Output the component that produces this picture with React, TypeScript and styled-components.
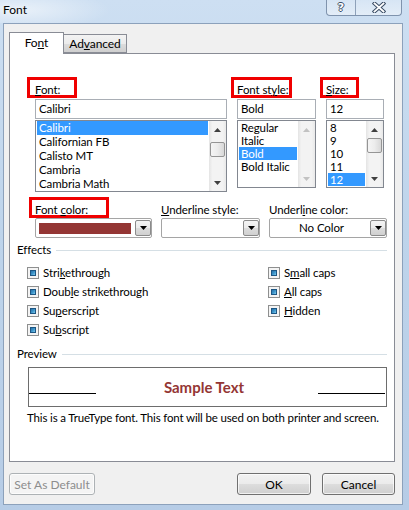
import React from "react";
import styled, { createGlobalStyle } from "styled-components";

const GlobalStyle = createGlobalStyle`
  html, body {
    margin: 0;
    padding: 0;
  }
  body {
    font-family: Lato, "Liberation Sans", sans-serif;
    font-size: 11.5px;
    letter-spacing: -0.1px;
    color: #000;
    background: #fff;
  }
  * {
    box-sizing: border-box;
  }
`;

///Window chrome

const Window = styled.div`
  width: 409px;
  height: 510px;
  display: flex;
  flex-direction: column;
  background: linear-gradient(180deg, #cddff2 0%, #bed4eb 45%, #b6cce6 100%);
`;

const TitleBar = styled.div`
  height: 23px;
  flex: none;
  display: flex;
  justify-content: space-between;
  align-items: flex-start;
  padding: 0 7px 0 3px;
  background: radial-gradient(ellipse 90px 20px at 20px 10px, rgba(255, 255, 255, 0.55), rgba(255, 255, 255, 0));
`;

const Title = styled.span`
  line-height: 20px;
  font-size: 12px;
  letter-spacing: 0;
  text-shadow: 0 0 6px rgba(255, 255, 255, 0.95);
`;

const CaptionGroup = styled.div`
  display: flex;
  height: 16px;
  border: 1px solid #7f93ad;
  border-top: none;
  border-radius: 0 0 4px 4px;
  overflow: hidden;
  background: linear-gradient(180deg, rgba(255, 255, 255, 0.2), rgba(255, 255, 255, 0.45));
`;

const CaptionButton = styled.div<{ $w: number }>`
  width: ${(p) => p.$w}px;
  display: flex;
  align-items: center;
  justify-content: center;
  & + & {
    border-left: 1px solid #8ea1b9;
  }
`;

const HelpGlyph = styled.span`
  font-family: "DejaVu Sans", sans-serif;
  font-weight: bold;
  font-size: 11px;
  line-height: 14px;
  color: #fff;
  text-shadow: 1px 0 0 #3d4f66, -1px 0 0 #3d4f66, 0 1px 0 #3d4f66, 0 -1px 0 #3d4f66;
`;

const Client = styled.div`
  flex: 1;
  margin: 0 6px 5px 3px;
  border: 1px solid #8ca1bb;
  background: #f0f0f0;
  display: flex;
  flex-direction: column;
  padding: 8px 7px 9px 5px;
`;

///Tabs

const TabStrip = styled.div`
  display: flex;
  align-items: flex-end;
  height: 21px;
  flex: none;
`;

const Tab = styled.div<{ $active?: boolean; $w: number }>`
  width: ${(p) => p.$w}px;
  height: ${(p) => (p.$active ? 22 : 19)}px;
  margin-bottom: ${(p) => (p.$active ? -1 : 0)}px;
  position: relative;
  z-index: ${(p) => (p.$active ? 1 : 0)};
  border: 1px solid #898c95;
  border-bottom: ${(p) => (p.$active ? "none" : "1px solid #898c95")};
  border-left: ${(p) => (p.$active ? "1px solid #898c95" : "none")};
  background: ${(p) => (p.$active ? "#fff" : "linear-gradient(180deg, #f3f3f3 0%, #ebebeb 50%, #dddddd 51%, #cfcfcf 100%)")};
  display: flex;
  justify-content: center;
  align-items: center;
  padding-bottom: ${(p) => (p.$active ? 2 : 0)}px;
  font-size: 12px;
`;

const Panel = styled.div`
  flex: 1;
  border: 1px solid #898c95;
  background: #fff;
  display: flex;
  flex-direction: column;
  padding: 23px 7px 0 7px;
`;

const U = styled.u`
  text-decoration: underline;
  text-underline-offset: 1px;
`;

///Font / style / size

const TopGrid = styled.div`
  display: grid;
  grid-template-columns: 192px 79px 58px;
  justify-content: space-between;
  width: 349px;
  margin-left: 18px;
`;

const Field = styled.div`
  display: flex;
  flex-direction: column;
  min-width: 0;
`;

const FieldLabel = styled.span<{ $boxed?: boolean; $w?: number; $shift?: number }>`
  display: block;
  align-self: flex-start;
  height: 21px;
  width: ${(p) => (p.$w ? `${p.$w}px` : "auto")};
  border: 3px solid ${(p) => (p.$boxed ? "#f00000" : "transparent")};
  margin-left: ${(p) => -6 - (p.$shift ?? 0)}px;
  padding: 2px 0 0 ${(p) => 3 + (p.$shift ?? 0)}px;
  line-height: 15px;
  white-space: nowrap;
`;

const TextBox = styled.div`
  height: 20px;
  margin-top: 1px;
  border: 1px solid #a9aeb5;
  padding-left: 3px;
  line-height: 18px;
`;

const ListBox = styled.div<{ $h: number }>`
  height: ${(p) => p.$h}px;
  margin-top: 1px;
  border: 1px solid #828790;
  display: flex;
`;

const ListItems = styled.div`
  flex: 1;
  min-width: 0;
  padding: 0 1px;
  overflow: hidden;
`;

const ListItem = styled.div<{ $selected?: boolean; $h: number }>`
  height: ${(p) => p.$h}px;
  line-height: ${(p) => p.$h}px;
  padding-left: 2px;
  white-space: nowrap;
  overflow: hidden;
  background: ${(p) => (p.$selected ? "#3399ff" : "transparent")};
  color: ${(p) => (p.$selected ? "#fff" : "#000")};
`;

const ScrollBar = styled.div`
  width: 17px;
  flex: none;
  display: flex;
  flex-direction: column;
  background: linear-gradient(90deg, #e4e4e4 0%, #f3f3f3 20%, #f3f3f3 80%, #e9e9e9 100%);
`;

const ScrollArrow = styled.div`
  height: 17px;
  flex: none;
  display: flex;
  align-items: center;
  justify-content: center;
`;

const ScrollSpace = styled.div`
  flex: 1;
`;

const Thumb = styled.div<{ $offset: number }>`
  height: 15px;
  margin: ${(p) => p.$offset}px 1px 0 1px;
  border: 1px solid #959595;
  border-radius: 2px;
  background: linear-gradient(90deg, #f5f5f5 0%, #ececec 50%, #d8d8d8 100%);
`;

const ArrowGlyph: React.FC<{ up?: boolean; color?: string }> = ({ up, color = "#404040" }) => (
  <svg width="7" height="4" viewBox="0 0 7 4">
    <path d={up ? "M0 4 L3.5 0 L7 4 Z" : "M0 0 L7 0 L3.5 4 Z"} fill={color} />
  </svg>
);

const Scroller: React.FC<{ disabled?: boolean; thumb?: number }> = ({ disabled, thumb }) => (
  <ScrollBar>
    <ScrollArrow>
      <ArrowGlyph up color={disabled ? "#c2c2c2" : "#404040"} />
    </ScrollArrow>
    {thumb !== undefined && <Thumb $offset={thumb} />}
    <ScrollSpace />
    <ScrollArrow>
      <ArrowGlyph color={disabled ? "#c2c2c2" : "#404040"} />
    </ScrollArrow>
  </ScrollBar>
);

///Combo row

const ComboGrid = styled.div`
  display: grid;
  grid-template-columns: 117px 99px 118px;
  column-gap: 9px;
  margin: 5px 0 0 18px;
`;

const Combo = styled.div`
  height: 20px;
  border: 1px solid #a5a5a5;
  border-radius: 2px;
  background: #fff;
  display: flex;
  align-items: center;
  padding: 1px 0 1px 3px;
`;

const ComboValue = styled.div`
  flex: 1;
  text-align: center;
  line-height: 16px;
`;

const Swatch = styled.div<{ $color: string }>`
  flex: 1;
  height: 11px;
  margin-right: 4px;
  background: ${(p) => p.$color};
`;

const ComboButton = styled.div`
  width: 16px;
  height: 16px;
  flex: none;
  border: 1px solid #8b8b8b;
  border-radius: 2px;
  background: linear-gradient(180deg, #f4f4f4 0%, #ebebeb 50%, #dcdcdc 51%, #d0d0d0 100%);
  display: flex;
  align-items: center;
  justify-content: center;
`;

///Effects + preview

const GroupHeader = styled.div<{ $gap: number }>`
  display: flex;
  align-items: center;
  height: 14px;
  line-height: 14px;
  margin-top: ${(p) => p.$gap}px;
  &::after {
    content: "";
    flex: 1;
    height: 1px;
    margin-left: 5px;
    background: #d5dfe5;
  }
`;

const CheckArea = styled.div`
  display: grid;
  grid-template-columns: 241px 1fr;
  margin: 6px 0 0 10px;
`;

const CheckColumn = styled.div`
  display: flex;
  flex-direction: column;
`;

const CheckRow = styled.div`
  height: 19px;
  display: flex;
  align-items: center;
  gap: 4px;
`;

const CheckBox = styled.span`
  width: 12px;
  height: 12px;
  flex: none;
  border: 1px solid #8e8f8f;
  background: #f4f4f4;
  padding: 2px;
  display: flex;
`;

const CheckFill = styled.span`
  flex: 1;
  border: 1px solid #1d5683;
  background: linear-gradient(135deg, #2872ab 0%, #3d94c9 50%, #7ccbee 100%);
`;

const PreviewBox = styled.div`
  height: 40px;
  margin: 6px 0 0 11px;
  border: 1px solid #6d6d6d;
  display: flex;
  align-items: center;
  justify-content: space-between;
  padding: 0 1px 0 0;
`;

const PreviewLine = styled.div`
  width: 67px;
  height: 1px;
  margin-top: 12px;
  background: #000;
`;

const SampleText = styled.span<{ $color: string }>`
  font-family: Lato, "Liberation Sans", sans-serif;
  font-weight: bold;
  font-size: 15px;
  letter-spacing: 0;
  color: ${(p) => p.$color};
  margin-right: 6px;
`;

const Note = styled.div`
  margin: 3px 0 0 10px;
  line-height: 15px;
  white-space: nowrap;
  letter-spacing: -0.15px;
`;

///Buttons

const ButtonRow = styled.div`
  display: flex;
  height: 22px;
  margin-top: 11px;
  flex: none;
  gap: 11px;
`;

const Spacer = styled.div`
  flex: 1;
`;

const DialogButton = styled.button<{ $w: number }>`
  width: ${(p) => p.$w}px;
  height: 22px;
  padding: 0;
  font-family: inherit;
  font-size: 12px;
  color: ${(p) => (p.disabled ? "#8d8d8d" : "#000")};
  border: 1px solid ${(p) => (p.disabled ? "#adb2b5" : "#707070")};
  border-radius: 3px;
  background: ${(p) =>
    p.disabled ? "#f4f4f4" : "linear-gradient(180deg, #f2f2f2 0%, #ebebeb 50%, #dddddd 51%, #cfcfcf 100%)"};
  box-shadow: inset 0 0 0 1px rgba(255, 255, 255, 0.7);
`;

const fonts = ["Calibri", "Californian FB", "Calisto MT", "Cambria", "Cambria Math"];
const styles = ["Regular", "Italic", "Bold", "Bold Italic"];
const sizes = ["8", "9", "10", "11", "12"];

const App: React.FC = () => {
  return (
    <Window>
      <GlobalStyle />
      <TitleBar>
        <Title>Font</Title>
        <CaptionGroup>
          <CaptionButton $w={28}>
            <HelpGlyph>?</HelpGlyph>
          </CaptionButton>
          <CaptionButton $w={46}>
            <svg width="14" height="11" viewBox="0 0 14 11">
              <path d="M2.5 1.5 L11.5 9.5 M11.5 1.5 L2.5 9.5" stroke="#3b4d65" strokeWidth="3.8" strokeLinecap="square" />
              <path d="M2.5 1.5 L11.5 9.5 M11.5 1.5 L2.5 9.5" stroke="#fff" strokeWidth="1.8" strokeLinecap="square" />
            </svg>
          </CaptionButton>
        </CaptionGroup>
      </TitleBar>

      <Client>
        <TabStrip>
          <Tab $active $w={55}>
            <span>
              Fo<U>n</U>t
            </span>
          </Tab>
          <Tab $w={63}>
            <span>
              Ad<U>v</U>anced
            </span>
          </Tab>
        </TabStrip>

        <Panel>
          <TopGrid>
            <Field>
              <FieldLabel $boxed $w={50} $shift={2}>
                <U>F</U>ont:
              </FieldLabel>
              <TextBox>Calibri</TextBox>
              <ListBox $h={72}>
                <ListItems>
                  {fonts.map((f, i) => (
                    <ListItem key={f} $h={14} $selected={i === 0}>
                      {f}
                    </ListItem>
                  ))}
                </ListItems>
                <Scroller thumb={4} />
              </ListBox>
            </Field>
            <Field>
              <FieldLabel $boxed $w={61}>
                Font st<U>y</U>le:
              </FieldLabel>
              <TextBox>Bold</TextBox>
              <ListBox $h={68}>
                <ListItems>
                  {styles.map((s) => (
                    <ListItem key={s} $h={13} $selected={s === "Bold"}>
                      {s}
                    </ListItem>
                  ))}
                </ListItems>
                <Scroller disabled />
              </ListBox>
            </Field>
            <Field>
              <FieldLabel $boxed $w={39}>
                <U>S</U>ize:
              </FieldLabel>
              <TextBox>12</TextBox>
              <ListBox $h={68}>
                <ListItems>
                  {sizes.map((s) => (
                    <ListItem key={s} $h={13} $selected={s === "12"}>
                      {s}
                    </ListItem>
                  ))}
                </ListItems>
                <Scroller thumb={0} />
              </ListBox>
            </Field>
          </TopGrid>

          <ComboGrid>
            <Field>
              <FieldLabel $boxed $w={80}>
                Font <U>c</U>olor:
              </FieldLabel>
              <Combo>
                <Swatch $color="#943634" />
                <ComboButton>
                  <ArrowGlyph color="#000" />
                </ComboButton>
              </Combo>
            </Field>
            <Field>
              <FieldLabel>
                <U>U</U>nderline style:
              </FieldLabel>
              <Combo>
                <ComboValue />
                <ComboButton>
                  <ArrowGlyph color="#000" />
                </ComboButton>
              </Combo>
            </Field>
            <Field>
              <FieldLabel>
                Underl<U>i</U>ne color:
              </FieldLabel>
              <Combo>
                <ComboValue>No Color</ComboValue>
                <ComboButton>
                  <ArrowGlyph color="#000" />
                </ComboButton>
              </Combo>
            </Field>
          </ComboGrid>

          <GroupHeader $gap={5}>Effects</GroupHeader>
          <CheckArea>
            <CheckColumn>
              <CheckRow>
                <CheckBox>
                  <CheckFill />
                </CheckBox>
                <span>
                  Stri<U>k</U>ethrough
                </span>
              </CheckRow>
              <CheckRow>
                <CheckBox>
                  <CheckFill />
                </CheckBox>
                <span>
                  Doub<U>l</U>e strikethrough
                </span>
              </CheckRow>
              <CheckRow>
                <CheckBox>
                  <CheckFill />
                </CheckBox>
                <span>
                  Su<U>p</U>erscript
                </span>
              </CheckRow>
              <CheckRow>
                <CheckBox>
                  <CheckFill />
                </CheckBox>
                <span>
                  Su<U>b</U>script
                </span>
              </CheckRow>
            </CheckColumn>
            <CheckColumn>
              <CheckRow>
                <CheckBox>
                  <CheckFill />
                </CheckBox>
                <span>
                  S<U>m</U>all caps
                </span>
              </CheckRow>
              <CheckRow>
                <CheckBox>
                  <CheckFill />
                </CheckBox>
                <span>
                  <U>A</U>ll caps
                </span>
              </CheckRow>
              <CheckRow>
                <CheckBox>
                  <CheckFill />
                </CheckBox>
                <span>
                  <U>H</U>idden
                </span>
              </CheckRow>
            </CheckColumn>
          </CheckArea>

          <GroupHeader $gap={8}>Preview</GroupHeader>
          <PreviewBox>
            <PreviewLine />
            <SampleText $color="#943634">Sample Text</SampleText>
            <PreviewLine />
          </PreviewBox>
          <Note>This is a TrueType font. This font will be used on both printer and screen.</Note>
        </Panel>

        <ButtonRow>
          <DialogButton $w={86} disabled>
            Set As Default
          </DialogButton>
          <Spacer />
          <DialogButton $w={74}>OK</DialogButton>
          <DialogButton $w={73}>Cancel</DialogButton>
        </ButtonRow>
      </Client>
    </Window>
  );
};

export default App;
